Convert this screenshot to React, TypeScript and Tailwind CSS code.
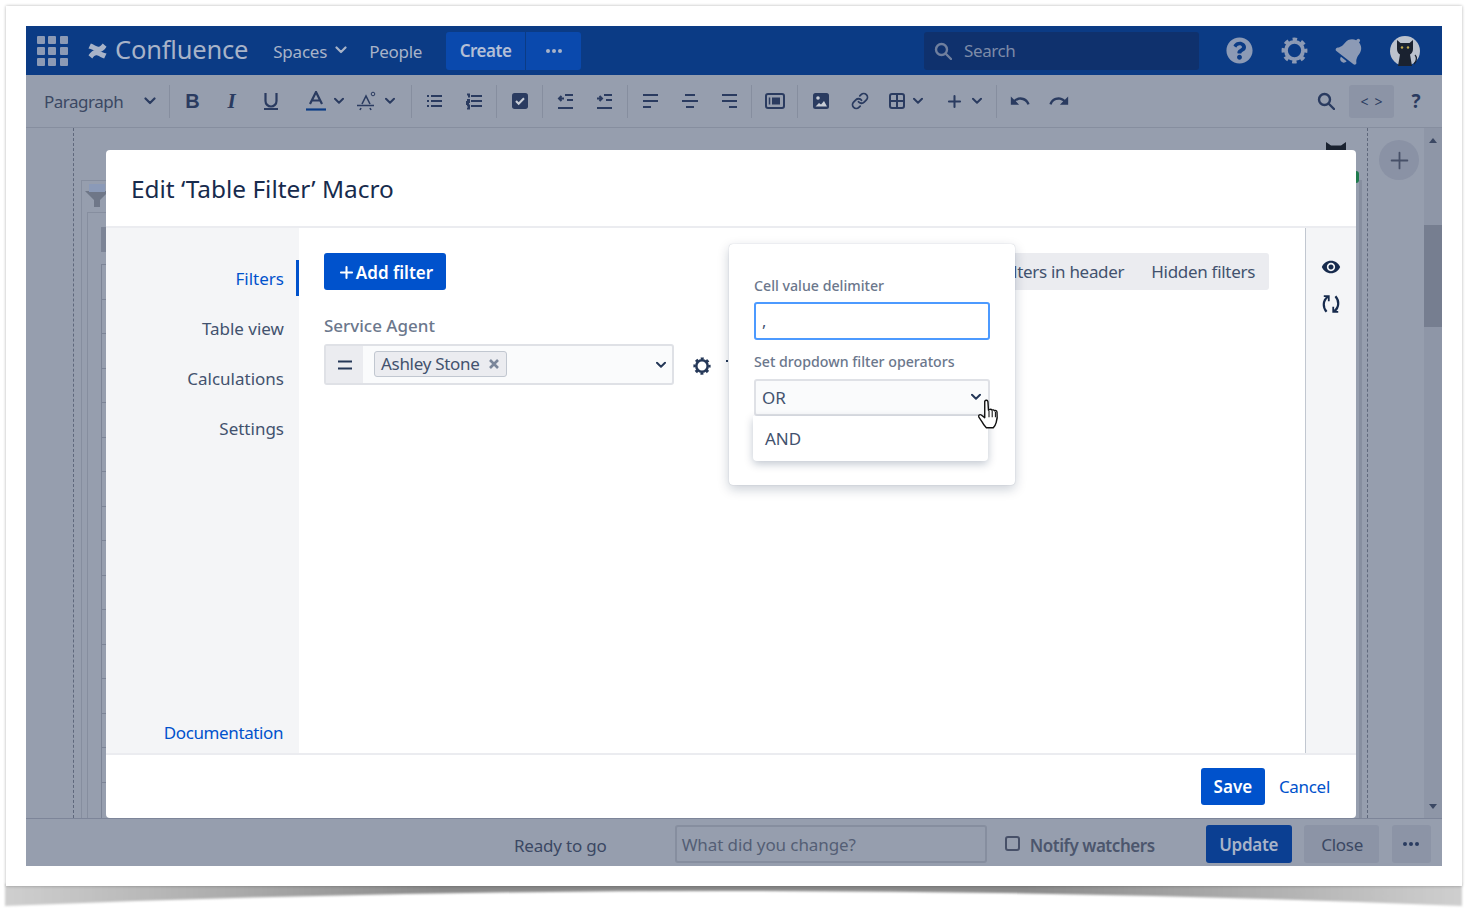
import React from "react";
import { FaBell, FaQuestionCircle } from "react-icons/fa";
import { MdRedo, MdRemoveRedEye, MdUndo } from "react-icons/md";
import { Link as LinkIcon, Plus } from "lucide-react";

const Chevron = ({ className = "" }: { className?: string }) => (
    <svg viewBox="0 0 12 8" className={`w-[12px] h-[8px] ${className}`} fill="none" stroke="currentColor" strokeWidth="2.2" strokeLinecap="round" strokeLinejoin="round">
        <path d="M1.5 1.5 6 6l4.5-4.5" />
    </svg>
);

const Gear = ({ className = "" }: { className?: string }) => (
    <svg viewBox="0 0 24 24" className={className} fill="none" stroke="currentColor">
        <circle cx="12" cy="12" r="7.6" strokeWidth="3.4" />
        <circle cx="12" cy="12" r="10" strokeWidth="3" strokeDasharray="4 3.854" strokeDashoffset="2" />
    </svg>
);

const Lines = ({ d }: { d: string }) => (
    <svg viewBox="0 0 18 18" className="w-[18px] h-[18px]" fill="none" stroke="currentColor" strokeWidth="2">
        <path d={d} />
    </svg>
);

const Slot = ({ children }: { children: React.ReactNode }) => (
    <div className="w-[39px] flex items-center justify-center shrink-0">{children}</div>
);

const Sep = () => <div className="w-px h-[33px] bg-[#868e9f] mx-[3px] shrink-0" />;

const NavItem = ({ children, active }: { children: React.ReactNode; active?: boolean }) => (
    <div className={`h-[36px] flex items-center justify-end pr-[12px] pt-[2px] mb-[14px] border-r-[3px] ${active ? "border-[#0052cc] text-[#0052cc]" : "border-transparent text-[#42526e]"}`}>
        {children}
    </div>
);

const Header = () => (
    <header className="h-[49px] bg-[#0b3b85] flex items-center text-[#a8b3c8] shrink-0">
        <div className="ml-[11px] grid grid-cols-3 gap-[3px] w-[31px]">
            {[1, 2, 3, 4, 5, 6, 7, 8, 9].map((i) => (
                <div key={i} className="w-[8px] h-[8px] rounded-[1px] bg-[#8c9ab5]" />
            ))}
        </div>
        <svg viewBox="0 0 20 18" className="ml-[20px] w-[19px] h-[18px] text-[#a8b3c8]" fill="currentColor">
            <path d="M.5 13.500C4 8 7.500 7 11 8.500c3 1.300 5.500 2.500 8.500 3.200L17 17c-3-1-5-2.500-7-3.200-2-.7-3.500.2-5.500 3Z" />
            <path d="M19.500 4.500C16 10 12.500 11 9 9.500 6 8.200 3.500 7 .5 6.300L3 1c3 1 5 2.500 7 3.200 2 .7 3.500-.2 5.500-3Z" />
        </svg>
        <span className="ml-[8px] text-[25.500px] leading-none -mt-[2px] tracking-[-0.2px]">Confluence</span>
        <span className="ml-[25px] text-[17px] mt-[2px] tracking-[-0.2px]">Spaces</span>
        <Chevron className="ml-[8px] -mt-[2px]" />
        <span className="ml-[22px] text-[17px] mt-[2px] tracking-[-0.3px]">People</span>
        <div className="ml-[24px] flex h-[38px] rounded-[3px] overflow-hidden bg-[#0a49ad]">
            <div className="w-[80px] flex items-center justify-center font-semibold text-[17px] tracking-[-0.5px] text-[#b3bfd6] border-r border-[#0b3b85]">Create</div>
            <div className="w-[55px] flex items-center justify-center gap-[2px]">
                <span className="w-[4px] h-[4px] rounded-full bg-[#a8b3c8]" />
                <span className="w-[4px] h-[4px] rounded-full bg-[#a8b3c8]" />
                <span className="w-[4px] h-[4px] rounded-full bg-[#a8b3c8]" />
            </div>
        </div>
        <div className="ml-[343px] w-[275px] h-[38px] rounded-[3px] bg-[#0f316d] flex items-center pl-[10px] text-[#7d8ba8]">
            <svg viewBox="0 0 18 18" className="w-[18px] h-[18px] text-[#6f7f9e]" fill="none" stroke="currentColor" strokeWidth="2.4" strokeLinecap="round">
                <circle cx="7.500" cy="7.500" r="5.500" />
                <path d="m12 12 5 5" />
            </svg>
            <span className="ml-[12px] text-[17px] tracking-[-0.4px]">Search</span>
        </div>
        <FaQuestionCircle className="ml-[27px] w-[27px] h-[27px] text-[#8c9ab5]" />
        <Gear className="ml-[28px] w-[27px] h-[27px] text-[#8c9ab5]" />
        <FaBell className="ml-[28px] w-[29px] h-[29px] text-[#8c9ab5] rotate-[38deg]" />
        <svg viewBox="0 0 30 30" className="ml-[25px] w-[30px] h-[30px]">
            <circle cx="15" cy="15" r="15" fill="#bcc2cd" />
            <path d="M7 4l3.500 3h9L23 4v9c0 3-1.500 4.500-3 5.500l2 11.500H8l2-11.500C8.500 17.500 7 16 7 13V4Z" fill="#1a2230" />
            <circle cx="12" cy="11.500" r="1.200" fill="#c4ab4e" />
            <circle cx="18" cy="11.500" r="1.200" fill="#c4ab4e" />
            <path d="M24 28c3-3 3-7 1-9" fill="none" stroke="#1a2230" strokeWidth="1.200" />
        </svg>
    </header>
);

const Toolbar = () => (
    <div className="h-[53px] bg-[#969eae] border-b border-[#868e9f] flex items-center text-[#2a3b60] shrink-0">
        <span className="ml-[18px] w-[92px] text-[17px] tracking-[-0.5px] text-[#3b4863] mt-[1px]">Paragraph</span>
        <Chevron className="ml-[8px]" />
        <div className="ml-[10px]"><Sep /></div>
        <Slot><span className="font-['Liberation_Sans',sans-serif] font-bold text-[20px] leading-none">B</span></Slot>
        <Slot><span className="font-['Liberation_Serif',serif] font-bold italic text-[21px] leading-none">I</span></Slot>
        <Slot>
            <svg viewBox="0 0 18 18" className="w-[18px] h-[18px]" fill="none" stroke="currentColor" strokeWidth="2.2">
                <path d="M3.500 1v8a5.500 5.500 0 0 0 11 0V1M2 17h14" />
            </svg>
        </Slot>
        <div className="ml-[15px] w-[48px] flex items-center">
            <svg viewBox="0 0 22 20" className="w-[22px] h-[20px]" fill="none" stroke="currentColor" strokeWidth="2.2">
                <path d="M5 13 11 1l6 12M7 9.500h8" />
                <path d="M1 18.500h20" stroke="#0b3b85" />
            </svg>
            <Chevron className="ml-[6px] scale-90" />
        </div>
        <div className="ml-[3px] w-[52px] flex items-center">
            <svg viewBox="0 0 22 20" className="w-[22px] h-[20px]" fill="none" stroke="currentColor" strokeWidth="1.600">
                <path d="M6 13 10 5l4 8M1 14.500h17M4 19l1-2M15 19l-1-2" />
                <circle cx="17" cy="3" r="1.800" strokeWidth="1" />
            </svg>
            <Chevron className="ml-[6px] scale-90" />
        </div>
        <Sep />
        <Slot><Lines d="M5 4h11M5 9h11M5 14h11M1 4h2M1 9h2M1 14h2" /></Slot>
        <Slot><Lines d="M6 4h11M6 9h11M6 14h11M2 2.500h2v3M2 8h2v2H2v2h2M2 13.500h2v3H2" /></Slot>
        <Sep />
        <Slot>
            <svg viewBox="0 0 18 18" className="w-[16px] h-[16px]">
                <rect x="0" y="0" width="18" height="18" rx="3" fill="currentColor" />
                <path d="m4.500 9 3 3 6-6" fill="none" stroke="#c8cdd6" strokeWidth="2.400" />
            </svg>
        </Slot>
        <Sep />
        <Slot><Lines d="M8 3h8M10 8h6M1 16h15M7 6.500H2M4.500 4 2 6.500 4.500 9" /></Slot>
        <Slot><Lines d="M8 3h8M10 8h6M1 16h15M1 6.500h5M3.500 4 6 6.500 3.500 9" /></Slot>
        <Sep />
        <Slot><Lines d="M1 3h15M1 9h15M1 15h8" /></Slot>
        <Slot><Lines d="M4 3h10M1 9h16M5 15h8" /></Slot>
        <Slot><Lines d="M2 3h15M2 9h15M9 15h8" /></Slot>
        <Sep />
        <Slot>
            <svg viewBox="0 0 20 16" className="w-[20px] h-[16px]" fill="none" stroke="currentColor" strokeWidth="2">
                <rect x="1" y="1" width="18" height="14" rx="2" />
                <path d="M7 4.500h8v7H7z" fill="#2a3b60" stroke="none" />
                <path d="M4.500 4.500v7" strokeWidth="1.500" />
            </svg>
        </Slot>
        <Sep />
        <Slot>
            <svg viewBox="0 0 16 16" className="w-[16px] h-[16px]">
                <rect width="16" height="16" rx="2.500" fill="currentColor" />
                <circle cx="5" cy="5" r="1.800" fill="#c8cdd6" />
                <path d="M2.500 13.500 6 10l2 1.500L11 8l3 5.500Z" fill="#c8cdd6" />
            </svg>
        </Slot>
        <Slot><LinkIcon size={18} strokeWidth={2.4} /></Slot>
        <div className="w-[58px] pl-[10px] flex items-center">
            <svg viewBox="0 0 16 16" className="w-[16px] h-[16px]" fill="none" stroke="currentColor" strokeWidth="2">
                <rect x="1" y="1" width="14" height="14" rx="2" />
                <path d="M8 1v14M1 8h14" />
            </svg>
            <Chevron className="ml-[7px] scale-90" />
        </div>
        <div className="w-[56px] pl-[8px] flex items-center">
            <Plus size={19} strokeWidth={2.6} />
            <Chevron className="ml-[7px] scale-90" />
        </div>
        <Sep />
        <Slot><MdUndo size={22} /></Slot>
        <Slot><MdRedo size={22} /></Slot>
        <div className="ml-auto flex items-center">
            <svg viewBox="0 0 18 18" className="w-[18px] h-[18px]" fill="none" stroke="currentColor" strokeWidth="2.400" strokeLinecap="round">
                <circle cx="7.500" cy="7.500" r="5.500" />
                <path d="m12 12 5 5" />
            </svg>
            <div className="ml-[14px] w-[45px] h-[33px] rounded-[3px] bg-[#8c94a6] flex items-center justify-center text-[14px] gap-[6px]">
                <span>&lt;</span>
                <span>&gt;</span>
            </div>
            <span className="ml-[16px] mr-[20px] w-[12px] text-[19px] font-bold leading-none text-center">?</span>
        </div>
    </div>
);

// page content dimmed behind the dialog
const EditorBackdrop = () => (
    <div className="flex-1 relative bg-[#969eae] overflow-hidden">
        <div className="absolute left-[47px] top-0 bottom-0 border-l border-dashed border-[#5f687c]" />
        <div className="absolute left-[55px] top-[52px] bottom-0 w-[40px] border-l border-t border-[#868e9f]">
            <svg viewBox="0 0 24 24" className="absolute left-[3px] top-[2px] w-[24px] h-[24px]">
                <path d="M0 8h24l-9 9v7H9v-7Z" fill="#6f7788" />
                <rect x="4" y="1" width="16" height="8" fill="#8b9ab8" />
            </svg>
            <div className="absolute left-[5px] top-[31px] bottom-0 w-[30px] border-l border-t border-[#868e9f]" />
            <div className="absolute left-[19px] top-[46px] w-[5px] h-[25px] bg-[#7c8496]" />
            <div className="absolute left-[19px] top-[83px] bottom-0 w-[20px] flex flex-col border-l border-[#7c8496]">
                {[1, 2, 3, 4, 5, 6, 7, 8, 9, 10, 11, 12, 13, 14, 15, 16].map((i) => (
                    <div key={i} className="h-[34.500px] border-t border-[#7c8496] shrink-0" />
                ))}
            </div>
        </div>
        <div className="absolute left-[1300px] top-[14px] w-[20px] h-[10px] bg-[#1a2230] [clip-path:polygon(0_0,25%_35%,75%_35%,100%_0,100%_100%,0_100%)]" />
        <div className="absolute left-[1327px] top-[43px] w-[6px] h-[12px] rounded-full bg-[#1f7a4d]" />
        <div className="absolute left-[1333px] top-[52px] bottom-0 border-l-[3px] border-[#868e9f]" />
        <div className="absolute left-[1341px] top-0 bottom-0 border-l border-dashed border-[#5f687c]" />
        <div className="absolute left-[1353px] top-[12px] w-[40px] h-[40px] rounded-full bg-[#8a92a5] flex items-center justify-center text-[#475068]">
            <Plus size={27} strokeWidth={1.6} />
        </div>
        <div className="absolute right-0 top-0 bottom-0 w-[18px] bg-[#8e96a7] flex flex-col items-center">
            <div className="mt-[10px] border-x-[4px] border-x-transparent border-b-[5px] border-b-[#3b4863]" />
            <div className="mt-[82px] w-full h-[102px] bg-[#767e90]" />
            <div className="mt-auto mb-[9px] border-x-[4px] border-x-transparent border-t-[5px] border-t-[#3b4863]" />
        </div>
    </div>
);

const Footer = () => (
    <footer className="h-[48px] bg-[#969eae] border-t border-[#7d8599] pt-[3px] flex items-center text-[#3b4863] text-[17px] shrink-0">
        <span className="ml-[488px] pt-[3px] tracking-[-0.2px]">Ready to go</span>
        <div className="ml-[68px] w-[312px] h-[38px] border-2 border-[#868e9f] rounded-[3px] flex items-center pl-[5px] pt-[2px] tracking-[-0.1px] text-[#545e75]">What did you change?</div>
        <div className="ml-[18px] w-[15px] h-[15px] border-2 border-[#475068] rounded-[3px] -mt-[2px]" />
        <span className="ml-[10px] pt-[3px] font-semibold tracking-[-0.45px] text-[#4c566d]">Notify watchers</span>
        <div className="ml-[51px] w-[86px] h-[38px] pt-[2px] rounded-[3px] bg-[#0b3f92] flex items-center justify-center font-semibold tracking-[-0.3px] text-[#a8b3c8]">Update</div>
        <div className="ml-[12px] w-[75px] h-[38px] pt-[2px] pl-[2px] rounded-[3px] bg-[#8c94a6] flex items-center justify-center tracking-[-0.3px]">Close</div>
        <div className="ml-[13px] w-[39px] h-[38px] rounded-[3px] bg-[#8c94a6] flex items-center justify-center gap-[2px]">
            <span className="w-[4px] h-[4px] rounded-full bg-[#2a3b60]" />
            <span className="w-[4px] h-[4px] rounded-full bg-[#2a3b60]" />
            <span className="w-[4px] h-[4px] rounded-full bg-[#2a3b60]" />
        </div>
    </footer>
);

const DelimiterPopover = () => (
    <div className="absolute left-[430px] top-[16px] w-[286px] h-[241px] bg-white rounded-[4px] shadow-[0_4px_12px_rgba(9,30,66,0.22),0_0_1px_rgba(9,30,66,0.3)] px-[25px] pt-[32px] text-[14.200px]">
        <div className="font-medium text-[#6b778c] leading-[20px] mb-[6px]">Cell value delimiter</div>
        <div className="w-[236px] h-[38px] border-2 border-[#4c9aff] rounded-[3px] pl-[6px] flex items-center text-[#42526e] text-[16px]">,</div>
        <div className="mt-[12px] font-medium text-[#6b778c] leading-[20px] mb-[7px]">Set dropdown filter operators</div>
        <div className="relative w-[236px] h-[37px] border-2 border-[#dfe1e6] bg-[#fafbfc] rounded-[3px] pl-[6px] flex items-center text-[#42526e] text-[17px]">
            OR
            <Chevron className="absolute right-[6px] top-[12px] text-[#253858] scale-90" />
            <div className="absolute -left-[3px] top-[35px] w-[235px] h-[45px] pt-[1px] bg-white rounded-b-[4px] shadow-[0_3px_8px_rgba(9,30,66,0.25)] pl-[12px] flex items-center">AND</div>
            <svg viewBox="0 0 22 30" className="absolute left-[221px] top-[18px] w-[24px] h-[32px]" fill="#fff" stroke="#111" strokeWidth="1.300" strokeLinejoin="round">
                <path d="M7 2c1-1.300 2.600-1 3 .5l.5 8 .8-.6c1-.5 2-.2 2.400.5 1-.5 2-.2 2.400.6 1-.4 2.200 0 2.400 1.200.4 3 .2 7-.8 10-.5 2-1.500 3.500-2.700 4.800H8.500c-1.500-1.500-3-3.500-4-5.500L1.500 17c-.7-1.500.8-3 2.200-2l3.300 2.500Z" />
                <path d="M11 11v6M14 11v6M17 12v5" strokeWidth="1" />
            </svg>
        </div>
    </div>
);

const MacroDialog = () => (
    <div className="absolute left-[80px] top-[124px] w-[1250px] h-[668px] bg-white rounded-[4px] flex flex-col text-[17px]">
        <div className="h-[78px] shrink-0 border-b-2 border-[#ebecf0] flex items-center pl-[25px]">
            <h1 className="text-[24.400px] text-[#172b4d] font-normal mt-[2px]">Edit ‘Table Filter’ Macro</h1>
        </div>
        <div className="flex-1 flex min-h-0">
            <aside className="w-[193px] shrink-0 bg-[#f4f5f7] pt-[32px] flex flex-col">
                <NavItem active>Filters</NavItem>
                <NavItem>Table view</NavItem>
                <NavItem>Calculations</NavItem>
                <NavItem>Settings</NavItem>
                <div className="mt-auto mb-[8px] pr-[16px] text-right tracking-[-0.4px] text-[#0052cc]">Documentation</div>
            </aside>
            <main className="relative flex-1 px-[25px] pt-[25px]">
                <div className="flex justify-between">
                    <div className="w-[122px] h-[37px] pt-[2px] rounded-[3px] bg-[#0052cc] text-white font-semibold flex items-center justify-center">
                        <Plus size={19} strokeWidth={2.6} />
                        <span>Add filter</span>
                    </div>
                    <div className="mr-[11px] h-[37px] pt-[1px] bg-[#ebecf0] rounded-r-[3px] flex items-center pl-[20px] pr-[14px] tracking-[-0.3px] text-[#42526e] gap-[27px]">
                        <span>Filters in header</span>
                        <span>Hidden filters</span>
                    </div>
                </div>
                <div className="mt-[24px] font-medium text-[#6b778c] leading-[24px]">Service Agent</div>
                <div className="mt-[6px] flex items-center">
                    <div className="w-[350px] h-[41px] border-2 border-[#dfe1e6] rounded-[3px] bg-[#fafbfc] flex items-center">
                        <div className="w-[37px] h-full bg-[#ebecf0] flex items-center justify-center text-[#253858]">
                            <svg viewBox="0 0 14 10" className="w-[14px] h-[10px]" fill="none" stroke="currentColor" strokeWidth="1.800">
                                <path d="M0 1.500h14M0 8.500h14" />
                            </svg>
                        </div>
                        <div className="ml-[11px] h-[26px] pl-[6px] pr-[7px] border border-[#c1c7d0] rounded-[3px] bg-[#ebecf0] flex items-center tracking-[-0.3px] text-[#42526e] -mt-[1px]">
                            Ashley Stone
                            <svg viewBox="0 0 10 10" className="ml-[9px] w-[10px] h-[10px] text-[#7a869a]" fill="none" stroke="currentColor" strokeWidth="2.600">
                                <path d="m1 1 8 8M9 1l-8 8" />
                            </svg>
                        </div>
                        <Chevron className="ml-auto mr-[5px] text-[#253858] scale-90" />
                    </div>
                    <Gear className="ml-[19px] mt-[2px] w-[18px] h-[18px] text-[#253858]" />
                    <span className="ml-[15px] -mt-[7px] w-[2px] h-[2px] bg-[#253858]" />
                </div>
                <DelimiterPopover />
            </main>
            <aside className="w-[51px] shrink-0 bg-[#f4f5f7] border-l border-[#c1c7d0] flex flex-col items-center pt-[29px] text-[#172b4d]">
                <MdRemoveRedEye size={20} />
                <svg viewBox="0 0 18 18" className="mt-[17px] w-[20px] h-[20px]" fill="none" stroke="currentColor" strokeWidth="2">
                    <path d="M6 2.500C1.500 6 1.500 12 5 16M12 15.500c4.500-3.500 4.500-9.500 1-13.500" />
                    <path d="M2.500 2h4.500v4.500M15.500 16H11v-4.500" strokeWidth="1.600" />
                </svg>
            </aside>
        </div>
        <div className="h-[65px] shrink-0 border-t-2 border-[#ebecf0] flex items-center justify-end pr-[26px]">
            <div className="w-[64px] h-[37px] rounded-[3px] bg-[#0052cc] text-white font-semibold flex items-center justify-center">Save</div>
            <span className="ml-[14px] tracking-[-0.3px] text-[#0052cc]">Cancel</span>
        </div>
    </div>
);

export default function App() {
    return (
        <div className="relative w-[1476px] h-[915px] overflow-hidden bg-white font-['Noto_Sans',sans-serif]">
            <svg viewBox="0 0 1476 915" className="absolute inset-0 w-full h-full">
                <defs>
                    <linearGradient id="drop" x1="0" x2="1" y1="0" y2="0">
                        <stop offset="0" stopColor="#cfcfcf" />
                        <stop offset="0.3" stopColor="#8a8a8a" />
                        <stop offset="0.7" stopColor="#8a8a8a" />
                        <stop offset="1" stopColor="#cfcfcf" />
                    </linearGradient>
                    <filter id="soft"><feGaussianBlur stdDeviation="1" /></filter>
                </defs>
                <path d="M5 884H1462V906Q731 876 5 906Z" fill="url(#drop)" filter="url(#soft)" />
            </svg>
            <div className="relative ml-[6px] mt-[6px] w-[1456px] h-[880px] bg-white shadow-[0_0_3px_rgba(0,0,0,0.3)] pl-[20px] pt-[20px]">
                <div className="relative w-[1416px] h-[840px] flex flex-col">
                    <Header />
                    <Toolbar />
                    <EditorBackdrop />
                    <Footer />
                    <MacroDialog />
                </div>
            </div>
        </div>
    );
}
